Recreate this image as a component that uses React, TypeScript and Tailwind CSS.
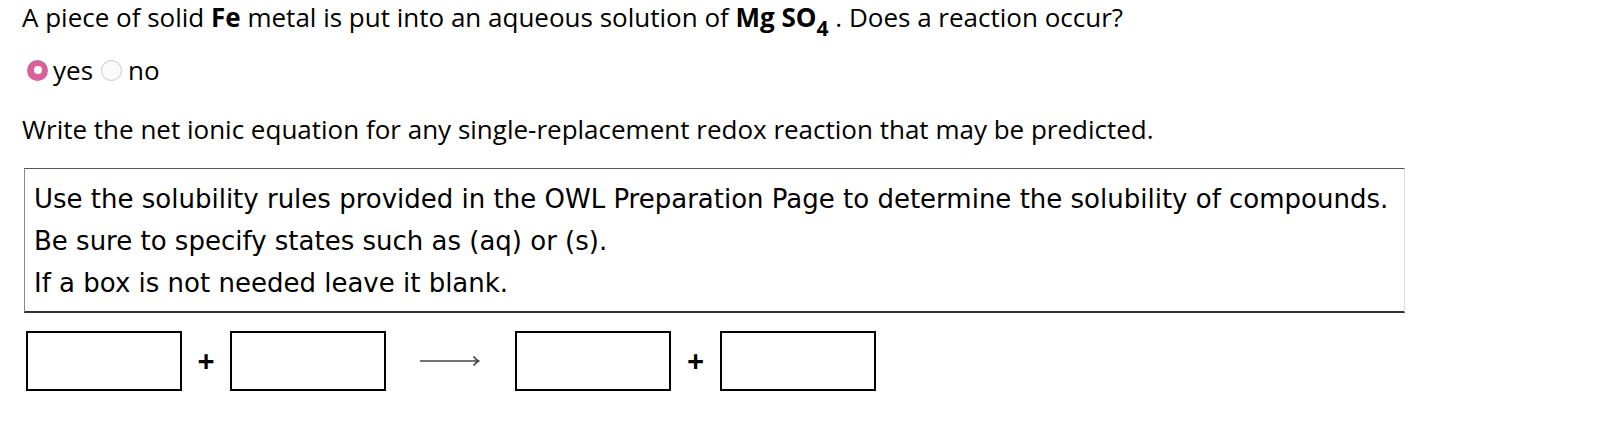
import React from "react";

function AnswerBox() {
  return <input type="text" className="w-[156px] h-[60px] border-2 border-black bg-white outline-none" />;
}

function Plus({ w }: { w: string }) {
  return <span className={`${w} text-center text-[30px] leading-[30px] font-bold`}>+</span>;
}

export default function App() {
  return (
    <div className="bg-white text-black min-h-screen pl-[22px]" style={{ fontFamily: '"Open Sans", sans-serif' }}>
      <p className="text-[26px] leading-[34px]">
        A piece of solid <b>Fe</b> metal is put into an aqueous solution of{" "}
        <b>
          Mg SO<sub className="text-[21px] -bottom-[0.45em]">4</sub>
        </b>{" "}
        . Does a reaction occur?
      </p>

      <div className="flex items-center mt-[21px] h-[30px] text-[26px]">
        <span className="ml-[5px] w-[21px] h-[21px] rounded-full bg-[#d9609b] flex items-center justify-center">
          <span className="w-[8px] h-[8px] rounded-full bg-white" />
        </span>
        <span className="ml-[5px]">yes</span>
        <span className="ml-[8px] w-[21px] h-[21px] rounded-full border border-[#c8c8c8] bg-[#fafafa]" />
        <span className="ml-[6px]">no</span>
      </div>

      <p className="text-[26px] leading-[36px] mt-[26px]">
        Write the net ionic equation for any single-replacement redox reaction that may be predicted.
      </p>

      <div
        className="mt-[21px] ml-[2px] w-[1381px] border-t border-l border-t-[#555] border-l-[#888] border-b-2 border-b-[#333] border-r border-r-[#ddd] pl-[9px] pt-[9px] pb-[7px] text-[26px] leading-[42px]"
        style={{ fontFamily: '"DejaVu Sans", Verdana, sans-serif' }}
      >
        <div>Use the solubility rules provided in the OWL Preparation Page to determine the solubility of compounds.</div>
        <div>Be sure to specify states such as (aq) or (s).</div>
        <div>If a box is not needed leave it blank.</div>
      </div>

      <div className="flex items-center mt-[18px] ml-[4px]">
        <AnswerBox />
        <Plus w="w-[48px]" />
        <AnswerBox />
        <svg width="60" height="14" viewBox="0 0 60 14" className="ml-[34px] mr-[35px]">
          <line x1="0" y1="7" x2="58.5" y2="7" stroke="#444" strokeWidth="1.7" />
          <path d="M53.5 2.5 Q56 5.5 58.5 7 Q56 8.5 53.5 11.5" fill="none" stroke="#444" strokeWidth="1.7" />
        </svg>
        <AnswerBox />
        <Plus w="w-[49px]" />
        <AnswerBox />
      </div>
    </div>
  );
}
